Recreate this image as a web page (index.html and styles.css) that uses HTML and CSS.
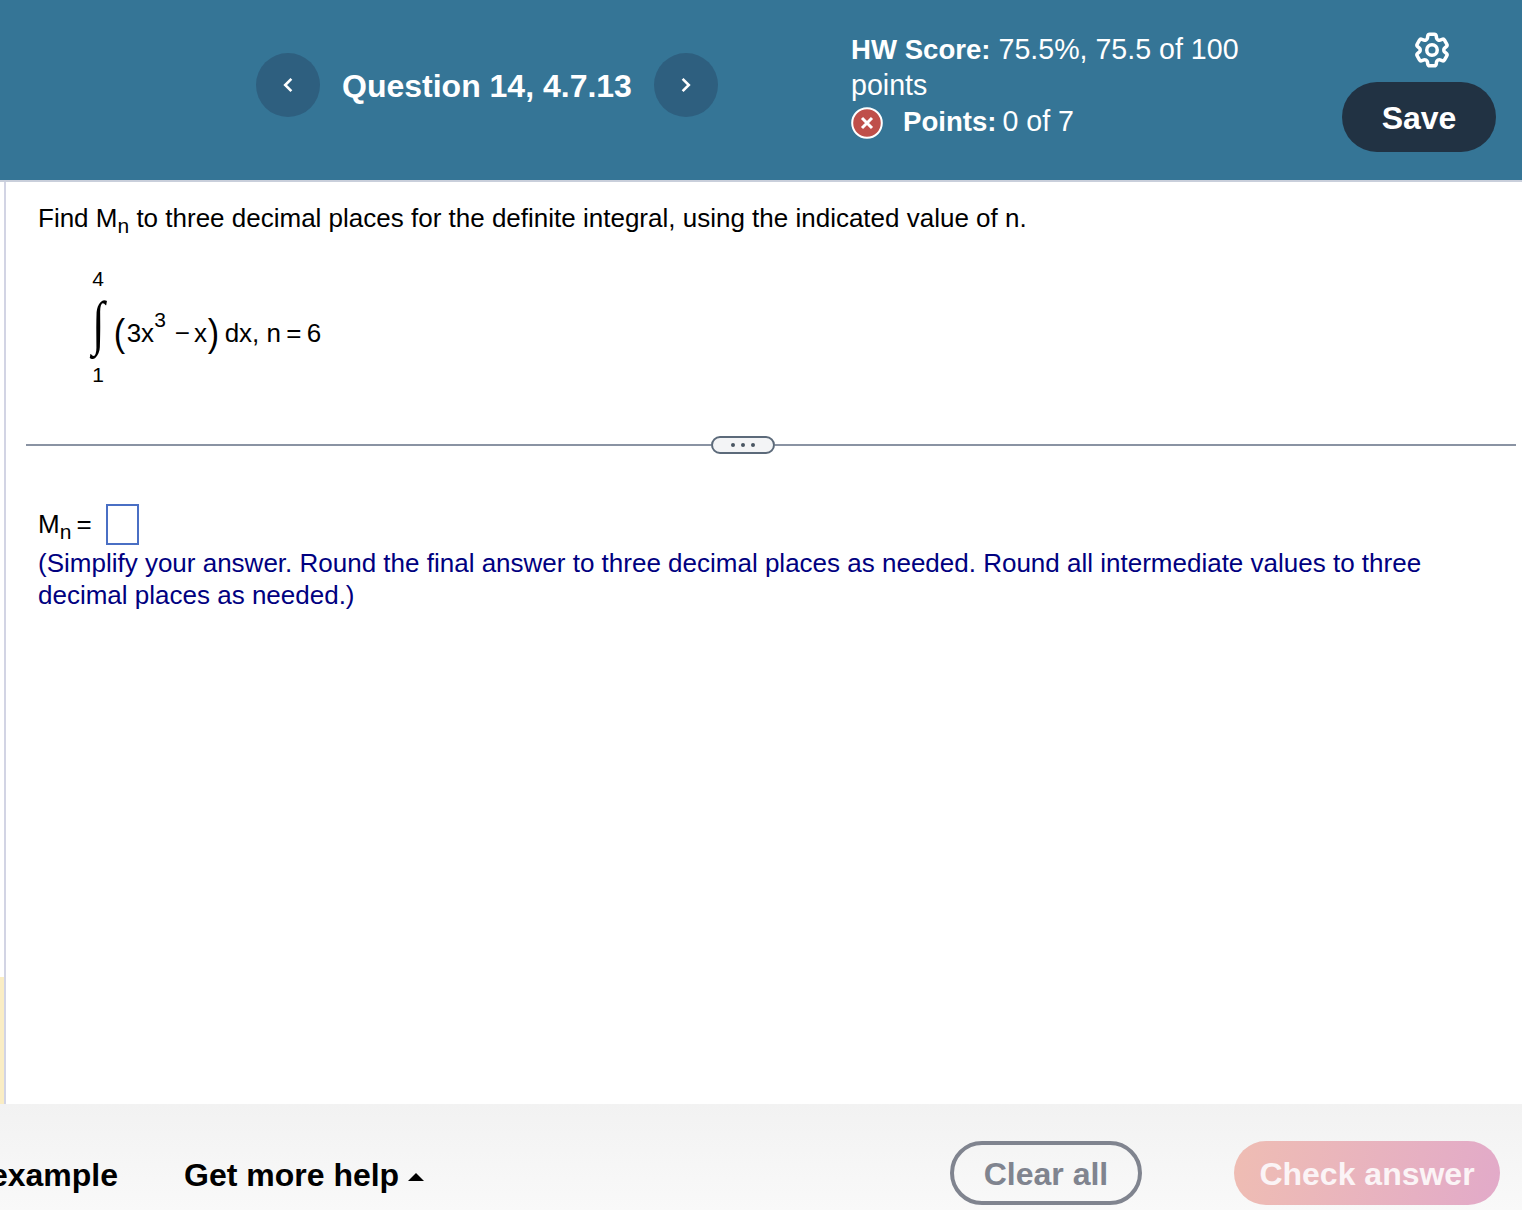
FILE: index.html
```html
<!DOCTYPE html>
<html lang="en">
<head>
<meta charset="utf-8">
<title>Question 14, 4.7.13</title>
<link rel="stylesheet" href="styles.css">
</head>
<body>
<div class="page">
  <header class="topbar">
    <nav class="question-nav">
      <button class="nav-btn" aria-label="Previous">
        <svg class="chev" viewBox="0 0 12 16"><path d="M9 2.500 3.500 8 9 13.500"/></svg>
      </button>
      <h1 class="question-title">Question 14, 4.7.13</h1>
      <button class="nav-btn" aria-label="Next">
        <svg class="chev" viewBox="0 0 12 16"><path d="M3 2.500 8.500 8 3 13.500"/></svg>
      </button>
    </nav>
    <div class="score">
      <div class="score-line"><b>HW Score:</b> 75.5%, 75.5 of 100 points</div>
      <div class="points-line">
        <svg class="x-icon" viewBox="0 0 32 32"><circle cx="16" cy="16" r="14.800"/><path d="M11 11l10 10M21 11 11 21"/></svg>
        <span><b class="points-label">Points:</b> 0 of 7</span>
      </div>
    </div>
    <div class="actions">
      <svg class="gear" viewBox="0 0 24 24"><path d="M9.594 3.940c.09-.542.56-.94 1.110-.94h2.593c.55 0 1.020.398 1.110.94l.213 1.281c.063.374.313.686.645.870.074.040.147.083.22.127.325.196.72.257 1.075.124l1.217-.456a1.125 1.125 0 0 1 1.370.49l1.296 2.247a1.125 1.125 0 0 1-.26 1.431l-1.003.827c-.293.241-.438.613-.43.992a7.723 7.723 0 0 1 0 .255c-.008.378.137.75.43.991l1.004.827c.424.35.534.955.26 1.430l-1.298 2.247a1.125 1.125 0 0 1-1.369.491l-1.217-.456c-.355-.133-.75-.072-1.076.124a6.470 6.470 0 0 1-.22.128c-.331.183-.581.495-.644.869l-.213 1.281c-.09.543-.56.94-1.110.94h-2.594c-.55 0-1.019-.398-1.110-.94l-.213-1.281c-.062-.374-.312-.686-.644-.87a6.520 6.520 0 0 1-.22-.127c-.325-.196-.72-.257-1.076-.124l-1.217.456a1.125 1.125 0 0 1-1.369-.49l-1.297-2.247a1.125 1.125 0 0 1 .26-1.431l1.004-.827c.292-.24.437-.613.43-.991a6.932 6.932 0 0 1 0-.255c.007-.38-.138-.751-.43-.992l-1.004-.827a1.125 1.125 0 0 1-.26-1.430l1.297-2.247a1.125 1.125 0 0 1 1.370-.491l1.216.456c.356.133.751.072 1.076-.124.072-.044.146-.086.22-.128.332-.183.582-.495.644-.869l.214-1.280Z"/><circle cx="12" cy="12" r="3"/></svg>
      <button class="save-btn">Save</button>
    </div>
  </header>
  <main class="content">
    <aside class="rail"><div class="rail-note"></div></aside>
    <div class="work">
      <p class="prompt">Find M<sub class="sub">n</sub> to three decimal places for the definite integral, using the indicated value of n.</p>
      <div class="formula">
        <div class="limits">
          <span class="limit">4</span>
          <span class="integral">∫</span>
          <span class="limit">1</span>
        </div>
        <div class="expr"><span class="paren paren-open">(</span>3x<sup class="sup">3</sup><span class="minus">−</span>x<span class="paren">)</span><span class="tail">dx, <span class="tight">n = 6</span></span></div>
      </div>
      <div class="divider">
        <span class="rule rule-left"></span>
        <span class="pill"><i class="dot"></i><i class="dot"></i><i class="dot"></i></span>
        <span class="rule"></span>
      </div>
      <div class="answer">
        <span class="tight">M<sub class="sub">n</sub> =</span>
        <span class="answer-box"></span>
      </div>
      <p class="hint">(Simplify your answer. Round the final answer to three decimal places as needed. Round all intermediate values to three decimal places as needed.)</p>
    </div>
  </main>
  <footer class="bottombar">
    <div class="clipped"><span class="link">example</span></div>
    <span class="link help">Get more help <span class="caret"></span></span>
    <button class="clear-btn">Clear all</button>
    <button class="check-btn">Check answer</button>
  </footer>
</div>
</body>
</html>
```
FILE: styles.css
```css
* { box-sizing: border-box; }
html, body { margin: 0; padding: 0; }
body {
  font-family: "Liberation Sans", Arial, sans-serif;
  color: #000;
  background: #fff;
}
.page {
  width: 1522px;
  height: 1210px;
  overflow: hidden;
  display: flex;
  flex-direction: column;
}
button { font-family: inherit; border: 0; cursor: pointer; }

/* top bar */
.topbar {
  height: 182px;
  flex: none;
  display: flex;
  background: #357596;
  border-bottom: 2px solid #c9cfdb;
  color: #fff;
}
.question-nav {
  display: flex;
  align-items: center;
  padding-left: 256px;
  width: 851px;
  height: 170px;
}
.nav-btn {
  width: 64px;
  height: 64px;
  border-radius: 50%;
  background: #2e5f7f;
  display: flex;
  align-items: center;
  justify-content: center;
  padding: 0;
  flex: none;
}
.chev { width: 14px; height: 18px; fill: none; stroke: #fff; stroke-width: 2.300; }
.question-title {
  margin: 2px 22px 0 22px;
  font-size: 32px;
  line-height: 40px;
  font-weight: 700;
  white-space: nowrap;
}
.score {
  width: 400px;
  padding-top: 31px;
  font-size: 28.600px;
  line-height: 36px;
}
.score b { font-size: 27.600px; line-height: 0; }
.points-label { margin-right: -2px; }
.points-line { display: flex; align-items: center; gap: 20px; }
.x-icon { width: 32px; height: 32px; margin-top: 3px; flex: none; }
.x-icon circle { fill: #bf4f4a; stroke: #fff; stroke-width: 2; }
.x-icon path { fill: none; stroke: #fff; stroke-width: 3; }
.actions {
  flex: 1;
  display: flex;
  flex-direction: column;
  align-items: flex-end;
  padding: 29px 26px 0 0;
}
.gear {
  width: 42px;
  height: 42px;
  margin-right: 43px;
  fill: none;
  stroke: #fff;
  stroke-width: 2;
}
.save-btn {
  margin-top: 11px;
  width: 154px;
  height: 70px;
  border-radius: 35px;
  background: #213243;
  color: #fff;
  font-size: 32px;
  font-weight: 700;
  padding: 2px 0 0;
}

/* content */
.content { flex: 1; display: flex; min-height: 0; }
.rail {
  width: 6px;
  flex: none;
  border-right: 2px solid #d2d4e4;
  display: flex;
  flex-direction: column;
  justify-content: flex-end;
}
.rail-note { height: 127px; background: #faedc4; }
.work { flex: 1; padding: 19px 6px 0 20px; }
.prompt {
  margin: 0 0 0 12px;
  font-size: 26px;
  line-height: 34px;
}
.sub { font-size: 21px; line-height: 0; vertical-align: -6px; }
.formula {
  margin: 32px 0 0 59px;
  display: flex;
  align-items: center;
  font-size: 26px;
}
.limits {
  width: 26px;
  display: flex;
  flex-direction: column;
  align-items: center;
}
.limit { font-size: 21px; line-height: 24px; }
.integral {
  font-size: 60px;
  line-height: 72px;
  font-family: "Liberation Serif", serif;
  font-weight: 400;
  transform: translateY(-4px) scaleX(.76);
}
.expr { display: flex; align-items: center; margin: 12px 0 0 2px; line-height: 30px; }
.paren { font-size: 38px; line-height: 30px; font-weight: 400; transform: scaleX(.9); }
.paren-open { margin-right: 1px; }
.sup { font-size: 21px; line-height: 0; align-self: flex-start; margin: 2px 0 0 0; }
.minus { margin: 0 4px 0 9px; }
.tail { margin-left: 5px; }
.tight { word-spacing: -2px; }
.divider {
  margin-top: 49px;
  height: 18px;
  display: flex;
  align-items: center;
}
.rule { flex: 1; height: 2px; background: #8a93a3; }
.rule-left { flex: none; width: 685px; }
.pill {
  width: 64px;
  height: 18px;
  border: 2px solid #5c6a7a;
  border-radius: 9px;
  background: #f3f4f6;
  display: flex;
  align-items: center;
  justify-content: center;
  gap: 6px;
  flex: none;
}
.dot { width: 4px; height: 4px; border-radius: 50%; background: #4a5563; }
.answer {
  margin: 49px 0 0 12px;
  display: flex;
  align-items: center;
  gap: 14px;
  font-size: 26px;
  height: 42px;
}
.answer-box {
  width: 33px;
  height: 41px;
  border: 2px solid #4a6fc4;
  background: #fff;
}
.hint {
  margin: 2px 0 0 12px;
  font-size: 26px;
  line-height: 32px;
  color: #000080;
  max-width: 1440px;
}

/* footer */
.bottombar {
  height: 106px;
  flex: none;
  display: flex;
  align-items: flex-start;
  padding-top: 37px;
  background: linear-gradient(#f2f2f2, #f9f9f9);
}
.clipped {
  width: 118px;
  height: 64px;
  padding-top: 5px;
  overflow: hidden;
  display: flex;
  justify-content: flex-end;
  align-items: center;
  flex: none;
}
.link { font-size: 32px; font-weight: 700; white-space: nowrap; }
.help {
  margin-left: 66px;
  height: 64px;
  padding-top: 5px;
  display: flex;
  align-items: center;
  gap: 9px;
  width: 766px;
  flex: none;
}
.caret {
  width: 0;
  height: 0;
  border-left: 8px solid transparent;
  border-right: 8px solid transparent;
  border-bottom: 8px solid #000;
  margin-top: 3px;
}
.clear-btn {
  width: 192px;
  height: 64px;
  border: 4px solid #80848f;
  border-radius: 32px;
  background: transparent;
  color: #80848f;
  font-size: 32px;
  font-weight: 700;
  padding: 3px 0 0;
  flex: none;
}
.check-btn {
  margin-left: 92px;
  width: 266px;
  height: 64px;
  border-radius: 32px;
  background: linear-gradient(100deg, #efbdb3, #e2aac9);
  color: #fbf4f6;
  font-size: 32px;
  font-weight: 700;
  padding: 3px 0 0;
  flex: none;
}
```
